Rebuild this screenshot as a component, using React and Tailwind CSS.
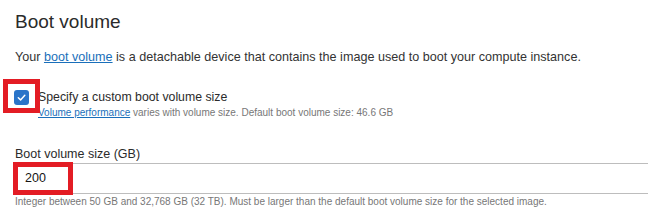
import React from 'react';

export default function App() {
  return (
    <div className="w-[648px] h-[215px] bg-white overflow-hidden font-['Liberation_Sans',Arial,sans-serif] text-[#333333]">
      <div className="pl-[15px] pt-[10px]">
        <h2 className="text-[19px] leading-[24px] font-normal text-[#2b2b2b]">Boot volume</h2>

        <p className="mt-[14px] text-[12.6px] leading-[18px]">
          Your <a className="text-[#1a6fba] underline">boot volume</a> is a detachable device that contains the image used to boot your compute instance.
        </p>

        {/* custom size checkbox */}
        <div className="relative mt-[23px] flex items-start">
          <span className="w-[15px] h-[15px] mt-[1px] rounded-[3px] bg-[#2a74c9] flex items-center justify-center shrink-0 -ml-[1px]">
            <svg width="11" height="11" viewBox="0 0 12 12" fill="none">
              <path d="M2.5 6.3 L5 8.6 L9.6 3.6" stroke="white" strokeWidth="1.6" strokeLinecap="round" strokeLinejoin="round" />
            </svg>
          </span>
          <div className="ml-[9px]">
            <div className="text-[12.3px] leading-[17px] text-[#2b2b2b]">Specify a custom boot volume size</div>
            <div className="text-[10px] leading-[14px] text-[#777777]">
              <a className="text-[#1a6fba] underline">Volume performance</a> varies with volume size. Default boot volume size: 46.6 GB
            </div>
          </div>
          <span className="absolute left-[-12px] top-[-10px] w-[37px] h-[34px] border-[5px] border-[#e31c24] pointer-events-none" />
        </div>

        {/* boot volume size input */}
        <div className="mt-[26px]">
          <label className="block text-[12.5px] leading-[16px] text-[#2b2b2b]">Boot volume size (GB)</label>
          <div className="relative mt-[1px] h-[31px] border-y border-l border-[#bdbdbd] flex items-center pl-[9px] text-[12.5px] text-[#161513]">
            200
            <span className="absolute left-[-3px] top-[-2px] w-[60px] h-[33px] border-[5px] border-[#e31c24] pointer-events-none" />
          </div>
          <div className="mt-[1px] text-[10px] leading-[14px] text-[#777777]">
            Integer between 50 GB and 32,768 GB (32 TB). Must be larger than the default boot volume size for the selected image.
          </div>
        </div>
      </div>
    </div>
  );
}
